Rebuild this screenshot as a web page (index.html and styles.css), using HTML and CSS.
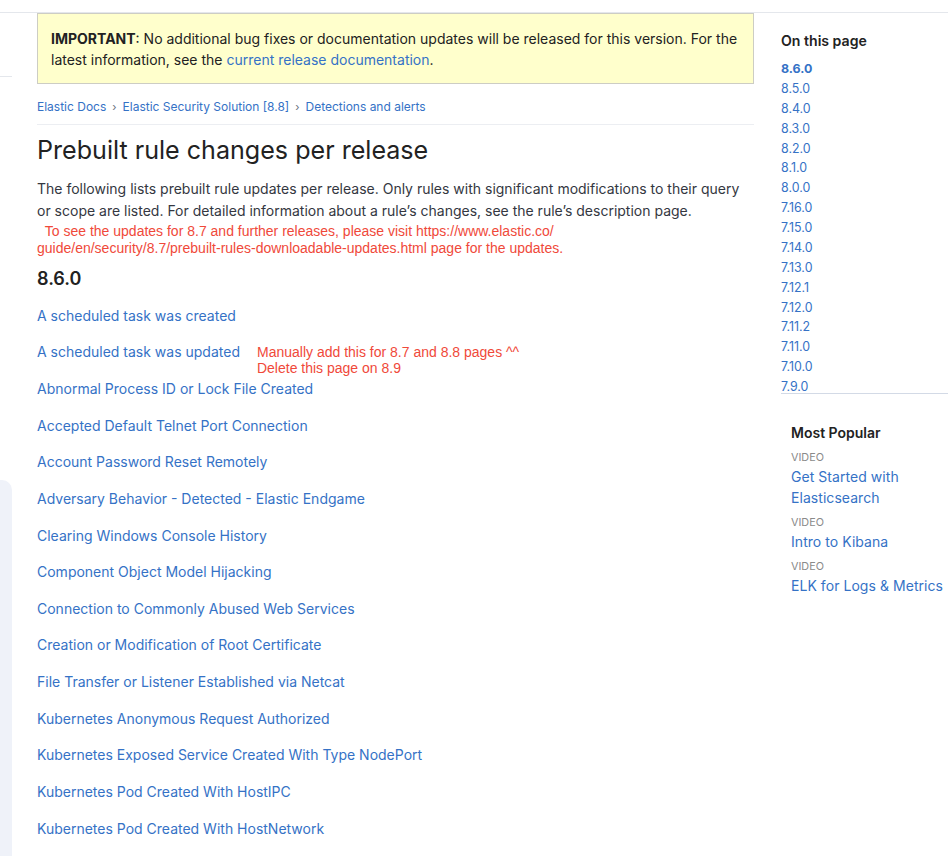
FILE: index.html
```html
<!DOCTYPE html>
<html lang="en">
<head>
    <meta charset="UTF-8">
    <meta name="viewport" content="width=device-width, initial-scale=1.0">
    <title>Prebuilt rule changes per release | Elastic Security Solution [8.8]</title>
    <link rel="stylesheet" href="styles.css">
</head>
<body>

<div class="topbar"></div>

<div class="page">
    <div class="leftnav">
        <div class="nav-rule"></div>
        <div class="nav-panel"></div>
    </div>

    <div class="main">
        <div class="notice">
            <strong>IMPORTANT</strong>: No additional bug fixes or documentation updates will be released for this version. For the latest information, see the <a href="#">current release documentation</a>.
        </div>

        <div class="breadcrumbs">
            <a href="#">Elastic Docs</a><span class="sep">›</span><a href="#">Elastic Security Solution [8.8]</a><span class="sep">›</span><a href="#">Detections and alerts</a>
        </div>

        <h1>Prebuilt rule changes per release</h1>

        <p class="intro">The following lists prebuilt rule updates per release. Only rules with significant modifications to their query or scope are listed. For detailed information about a rule’s changes, see the rule’s description page.</p>

        <p class="editor-note">&nbsp;&nbsp;To see the updates for 8.7 and further releases, please visit https://www.elastic.co/<br>guide/en/security/8.7/prebuilt-rules-downloadable-updates.html page for the updates.</p>

        <h2>8.6.0</h2>

        <ul class="rules">
            <li><a href="#">A scheduled task was created</a></li>
            <li><a href="#">A scheduled task was updated</a><span class="row-note">Manually add this for 8.7 and 8.8 pages ^^<br>Delete this page on 8.9</span></li>
            <li><a href="#">Abnormal Process ID or Lock File Created</a></li>
            <li><a href="#">Accepted Default Telnet Port Connection</a></li>
            <li><a href="#">Account Password Reset Remotely</a></li>
            <li><a href="#">Adversary Behavior - Detected - Elastic Endgame</a></li>
            <li><a href="#">Clearing Windows Console History</a></li>
            <li><a href="#">Component Object Model Hijacking</a></li>
            <li><a href="#">Connection to Commonly Abused Web Services</a></li>
            <li><a href="#">Creation or Modification of Root Certificate</a></li>
            <li><a href="#">File Transfer or Listener Established via Netcat</a></li>
            <li><a href="#">Kubernetes Anonymous Request Authorized</a></li>
            <li><a href="#">Kubernetes Exposed Service Created With Type NodePort</a></li>
            <li><a href="#">Kubernetes Pod Created With HostIPC</a></li>
            <li><a href="#">Kubernetes Pod Created With HostNetwork</a></li>
            <li><a href="#">Kubernetes Pod Created With HostPID</a></li>
        </ul>
    </div>

    <div class="sidebar">
        <div class="toc-title">On this page</div>
        <ul class="toc">
            <li><a href="#" class="current">8.6.0</a></li>
            <li><a href="#">8.5.0</a></li>
            <li><a href="#">8.4.0</a></li>
            <li><a href="#">8.3.0</a></li>
            <li><a href="#">8.2.0</a></li>
            <li><a href="#">8.1.0</a></li>
            <li><a href="#">8.0.0</a></li>
            <li><a href="#">7.16.0</a></li>
            <li><a href="#">7.15.0</a></li>
            <li><a href="#">7.14.0</a></li>
            <li><a href="#">7.13.0</a></li>
            <li><a href="#">7.12.1</a></li>
            <li><a href="#">7.12.0</a></li>
            <li><a href="#">7.11.2</a></li>
            <li><a href="#">7.11.0</a></li>
            <li><a href="#">7.10.0</a></li>
            <li><a href="#">7.9.0</a></li>
            <li><a href="#">7.8.0</a></li>
            <li><a href="#">7.7.0</a></li>
        </ul>

        <div class="popular">
            <div class="popular-title">Most Popular</div>
            <div class="pop-item">
                <div class="pop-label">VIDEO</div>
                <a href="#">Get Started with Elasticsearch</a>
            </div>
            <div class="pop-item">
                <div class="pop-label">VIDEO</div>
                <a href="#">Intro to Kibana</a>
            </div>
            <div class="pop-item">
                <div class="pop-label">VIDEO</div>
                <a href="#">ELK for Logs &amp; Metrics</a>
            </div>
        </div>
    </div>
</div>

</body>
</html>
```

FILE: styles.css
```css
body {
    font-family: Inter, "Noto Sans", sans-serif;
    font-size: 14px;
    color: #343741;
    background-color: white;
    margin: 0;
    overflow: hidden;
}
a {
    color: #3572c6;
    text-decoration: none;
}
.topbar {
    height: 12px;
    border-bottom: 1px solid #e4e7ec;
}
.page {
    display: flex;
    align-items: flex-start;
}
.leftnav {
    width: 12px;
    flex-shrink: 0;
}
.nav-rule {
    margin-top: 63px;
    border-top: 1px solid #e4e7ec;
}
.nav-panel {
    margin-top: 403px;
    height: 400px;
    background-color: #eff2f9;
    border-top-right-radius: 10px;
}
.main {
    width: 717px;
    margin-left: 25px;
    flex-shrink: 0;
}
.notice {
    background-color: #ffffcc;
    border: 1px solid #cdcdc4;
    padding: 14px 14px 13px 13px;
    line-height: 21px;
    color: #222;
}
.notice strong {
    font-weight: 700;
}
.breadcrumbs {
    margin-top: 14px;
    padding-bottom: 8px;
    border-bottom: 1px solid #eceef2;
    font-size: 12px;
    line-height: 17px;
}
.breadcrumbs .sep {
    color: #69707d;
    margin: 0 6px;
    font-size: 11px;
}
h1 {
    margin: 9px 0 0 0;
    font-size: 25.1px;
    line-height: 32px;
    font-weight: 400;
    color: #222;
}
.intro {
    margin: 12px 0 0 0;
    line-height: 22px;
}
.editor-note {
    margin: 1px 0 0 0;
    font-family: "Liberation Sans", Arial, sans-serif;
    font-size: 14px;
    line-height: 17px;
    color: #f0493a;
}
h2 {
    margin: 10px 0 0 0;
    font-size: 18px;
    line-height: 24px;
    font-weight: 600;
    color: #222;
}
.rules {
    list-style: none;
    margin: 6.7px 0 0 0;
    padding: 0;
}
.rules li {
    display: flex;
    align-items: flex-start;
    height: 36.65px;
    padding-top: 7px;
    box-sizing: border-box;
    line-height: 22px;
}
.row-note {
    margin: 3px 0 0 17px;
    font-family: "Liberation Sans", Arial, sans-serif;
    font-size: 14px;
    line-height: 16px;
    color: #f0493a;
}
.sidebar {
    margin-left: 27px;
    flex: 1;
}
.toc-title {
    margin-top: 18px;
    font-size: 14.1px;
    line-height: 20px;
    font-weight: 600;
    color: #222;
}
.toc {
    list-style: none;
    margin: 8px 0 0 0;
    padding: 0;
    height: 334px;
    overflow: hidden;
    border-bottom: 1px solid #d3dae6;
}
.toc li {
    font-size: 12.4px;
    line-height: 19.875px;
}
.toc .current {
    font-weight: 700;
}
.popular {
    margin-top: 29px;
    padding-left: 10px;
}
.popular-title {
    line-height: 20px;
    font-weight: 600;
    color: #222;
}
.pop-item {
    margin-top: 6.5px;
}
.pop-item:first-of-type {
    margin-top: 8px;
}
.pop-label {
    font-size: 10.8px;
    line-height: 16px;
    color: #8a8a8a;
    margin-bottom: 0.5px;
}
.pop-item a {
    display: block;
    line-height: 21px;
    letter-spacing: 0.05px;
}
```
